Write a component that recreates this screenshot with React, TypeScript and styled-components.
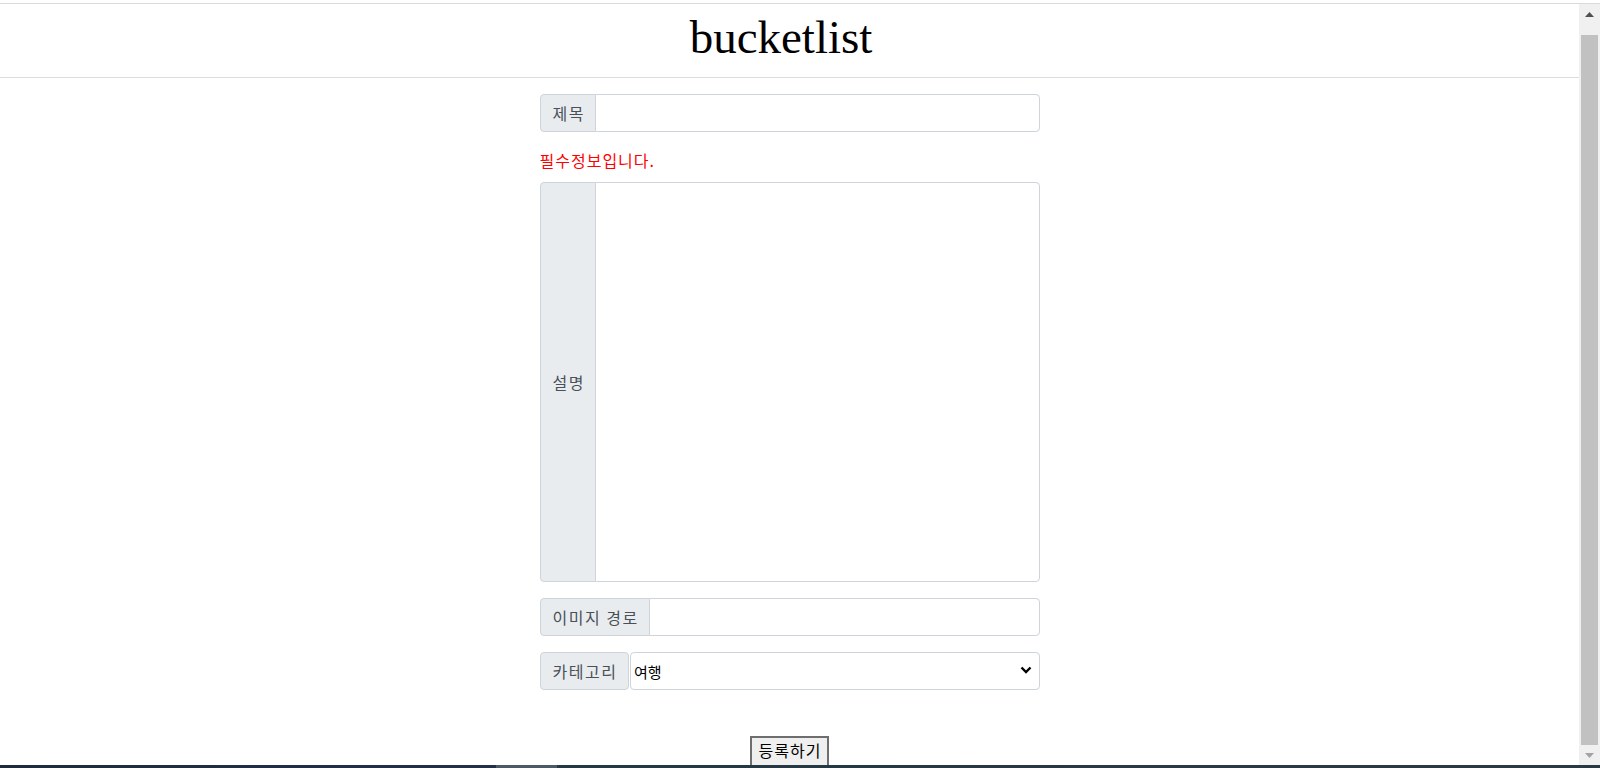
import { useState } from 'react';
import styled, { createGlobalStyle } from 'styled-components';

const KR = `'Noto Sans CJK KR', 'Noto Sans', sans-serif`;

const GlobalStyle = createGlobalStyle`
  html, body {
    margin: 0;
    height: 768px;
    overflow: hidden;
    background: #fff;
  }
  * {
    box-sizing: border-box;
  }
`;

const App = () => {
  const [title, setTitle] = useState('');
  const [desc, setDesc] = useState('');
  const [image, setImage] = useState('');
  const [category, setCategory] = useState('travel');

  return (
    <Frame>
      <GlobalStyle />
      <TopEdge />
      <Body>
        <Viewport>
          <Header>
            <Title>bucketlist</Title>
          </Header>
          <Form onSubmit={(e) => e.preventDefault()}>
            <InputGroup>
              <Addon>제목</Addon>
              <Control value={title} onChange={(e) => setTitle(e.target.value)} />
            </InputGroup>
            <ErrorText>필수정보입니다.</ErrorText>
            <InputGroup $gap>
              <Addon>설명</Addon>
              <TextArea value={desc} onChange={(e) => setDesc(e.target.value)} />
            </InputGroup>
            <InputGroup $gap>
              <Addon>이미지 경로</Addon>
              <Control value={image} onChange={(e) => setImage(e.target.value)} />
            </InputGroup>
            <InputGroup>
              <Addon $round>카테고리</Addon>
              <SelectWrap>
                <Select value={category} onChange={(e) => setCategory(e.target.value)}>
                  <option value='travel'>여행</option>
                  <option value='study'>공부</option>
                  <option value='hobby'>취미</option>
                </Select>
                <Chevron width='12' height='8' viewBox='0 0 12 8'>
                  <path d='M1.5 1.5 L6 6 L10.5 1.5' fill='none' stroke='#000' strokeWidth='2.4' />
                </Chevron>
              </SelectWrap>
            </InputGroup>
            <SubmitRow>
              <SubmitButton type='submit'>등록하기</SubmitButton>
            </SubmitRow>
          </Form>
        </Viewport>
        <Scrollbar>
          <ArrowButton>
            <svg width='9' height='5' viewBox='0 0 9 5'>
              <polygon points='0,5 4.5,0 9,5' fill='#505050' />
            </svg>
          </ArrowButton>
          <Track>
            <Thumb />
          </Track>
          <ArrowButton $short>
            <svg width='9' height='5' viewBox='0 0 9 5'>
              <polygon points='0,0 9,0 4.5,5' fill='#a3a3a3' />
            </svg>
          </ArrowButton>
        </Scrollbar>
      </Body>
      <Taskbar />
    </Frame>
  );
};

export default App;

/** STYLES */

const Frame = styled.div`
  height: 768px;
  display: flex;
  flex-direction: column;
`;

const TopEdge = styled.div`
  height: 4px;
  flex-shrink: 0;
  border-bottom: 1px solid #dadada;
`;

const Body = styled.div`
  flex: 1;
  display: flex;
  min-height: 0;
`;

const Viewport = styled.div`
  flex: 1;
  overflow: hidden;
`;

const Header = styled.header`
  height: 74px;
  border-bottom: 1px solid #dcdcdc;
  display: flex;
  align-items: center;
  justify-content: center;
  padding: 0 17px 8px 0;
`;

const Title = styled.h1`
  margin: 0;
  font-family: 'Liberation Serif', serif;
  font-weight: 400;
  font-size: 47px;
  line-height: normal;
  color: #000;
`;

const Form = styled.form`
  width: 500px;
  margin: 0 auto;
  padding-top: 16px;
  font-family: ${KR};
`;

const InputGroup = styled.div<{ $gap?: boolean }>`
  display: flex;
  align-items: stretch;
  margin-bottom: ${({ $gap }) => ($gap ? '16px' : '0')};
`;

const Addon = styled.span<{ $round?: boolean }>`
  display: flex;
  align-items: center;
  padding: 6px 10.5px 6px 12px;
  font-size: 16px;
  line-height: 24px;
  letter-spacing: 1.5px;
  color: #495057;
  background: #e9ecef;
  border: 1px solid #ced4da;
  border-radius: ${({ $round }) => ($round ? '4px' : '4px 0 0 4px')};
  white-space: nowrap;
`;

const Control = styled.input`
  flex: 1;
  min-width: 0;
  height: 38px;
  margin-left: -1px;
  padding: 6px 12px;
  font-family: ${KR};
  font-size: 16px;
  color: #495057;
  background: #fff;
  border: 1px solid #ced4da;
  border-radius: 0 4px 4px 0;
  outline: none;
`;

const TextArea = styled.textarea`
  flex: 1;
  height: 400px;
  margin-left: -1px;
  padding: 6px 12px;
  font-family: ${KR};
  font-size: 16px;
  color: #495057;
  border: 1px solid #ced4da;
  border-radius: 0 4px 4px 0;
  resize: none;
  outline: none;
`;

const ErrorText = styled.p`
  margin: 16px 0 10px;
  font-size: 16px;
  line-height: 24px;
  letter-spacing: 1px;
  color: #ff0000;
`;

const SelectWrap = styled.div`
  position: relative;
  flex: 1;
  margin-left: 1px;
  display: flex;
`;

const Select = styled.select`
  flex: 1;
  height: 38px;
  padding: 0 0 0 3px;
  font-family: ${KR};
  font-size: 15px;
  color: #000;
  background: #fff;
  border: 1px solid #ced4da;
  border-radius: 4px;
  appearance: none;
  outline: none;
`;

const Chevron = styled.svg`
  position: absolute;
  right: 8px;
  top: 14px;
  pointer-events: none;
`;

const SubmitRow = styled.div`
  display: flex;
  justify-content: center;
  margin-top: 46px;
`;

const SubmitButton = styled.button`
  padding: 1px 6px 4px 7px;
  font-family: ${KR};
  font-size: 16px;
  line-height: 22px;
  letter-spacing: 1px;
  color: #000;
  background: #efefef;
  border: 2px solid #6e6e6e;
  border-radius: 0;
`;

const Scrollbar = styled.div`
  width: 21px;
  flex-shrink: 0;
  display: flex;
  flex-direction: column;
  background: #f0f0f0;
`;

const ArrowButton = styled.div<{ $short?: boolean }>`
  height: ${({ $short }) => ($short ? '20px' : '21px')};
  display: flex;
  align-items: center;
  justify-content: center;
`;

const Track = styled.div`
  flex: 1;
  display: flex;
  padding: 10px 2px 0;
`;

const Thumb = styled.div`
  flex: 1;
  background: #c1c1c1;
`;

const Taskbar = styled.div`
  height: 3px;
  flex-shrink: 0;
  background: linear-gradient(
    90deg,
    #1f2a3d 0,
    #22304a 496px,
    #4d5966 496px,
    #4d5966 557px,
    #263844 557px,
    #2a3a42 100%
  );
`;
